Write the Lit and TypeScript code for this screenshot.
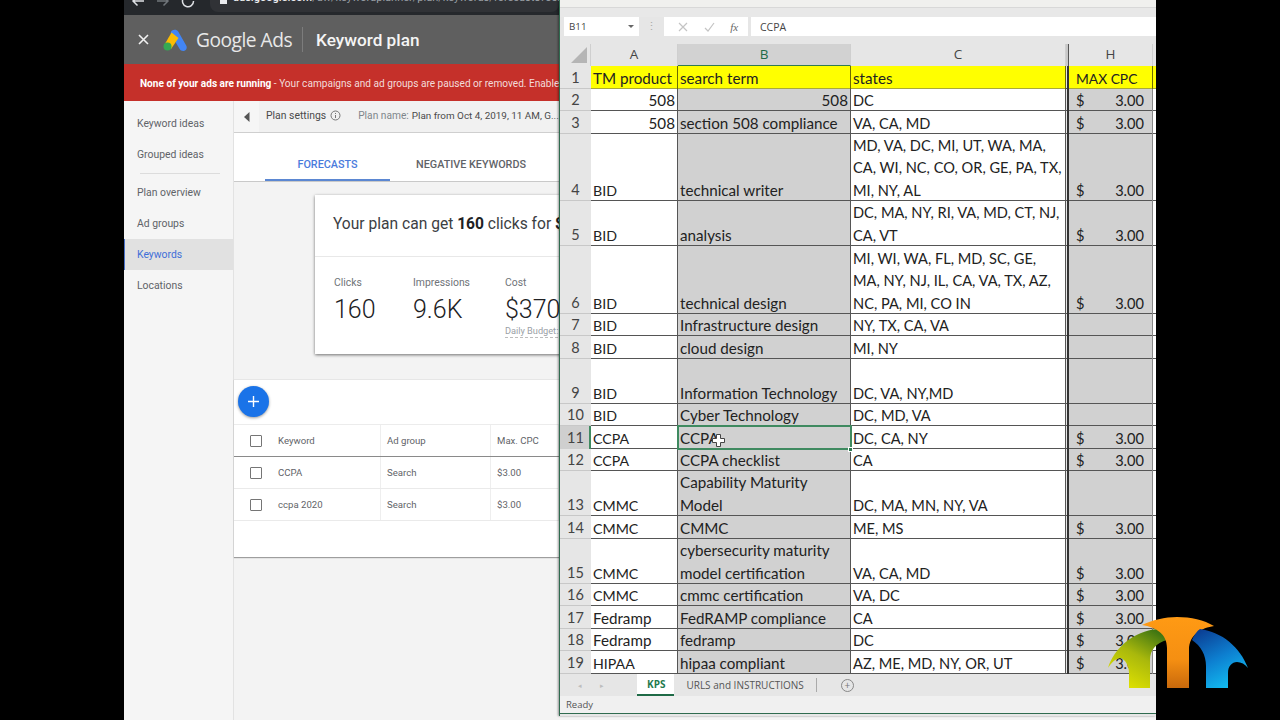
import { LitElement, html, css, svg } from 'lit';
import { customElement } from 'lit/decorators.js';

type Row = { n: number; lines: number; a: string; aRight?: boolean; b: string | string[]; bRight?: boolean; c: string[]; h: boolean };

const rows: Row[] = [
  { n: 2, lines: 1, a: '508', aRight: true, b: '508', bRight: true, c: ['DC'], h: true },
  { n: 3, lines: 1, a: '508', aRight: true, b: 'section 508 compliance', c: ['VA, CA, MD'], h: true },
  { n: 4, lines: 3, a: 'BID', b: 'technical writer', c: ['MD, VA, DC, MI, UT, WA, MA,', 'CA, WI, NC, CO, OR, GE, PA, TX,', 'MI, NY, AL'], h: true },
  { n: 5, lines: 2, a: 'BID', b: 'analysis', c: ['DC, MA, NY, RI, VA, MD, CT, NJ,', 'CA, VT'], h: true },
  { n: 6, lines: 3, a: 'BID', b: 'technical design', c: ['MI, WI, WA, FL, MD, SC, GE,', 'MA, NY, NJ, IL, CA, VA, TX, AZ,', 'NC, PA, MI, CO IN'], h: true },
  { n: 7, lines: 1, a: 'BID', b: 'Infrastructure design', c: ['NY, TX, CA, VA'], h: false },
  { n: 8, lines: 1, a: 'BID', b: 'cloud design', c: ['MI, NY'], h: false },
  { n: 9, lines: 2, a: 'BID', b: 'Information Technology', c: ['DC, VA, NY,MD'], h: false },
  { n: 10, lines: 1, a: 'BID', b: 'Cyber Technology', c: ['DC, MD, VA'], h: false },
  { n: 11, lines: 1, a: 'CCPA', b: 'CCPA', c: ['DC, CA, NY'], h: true },
  { n: 12, lines: 1, a: 'CCPA', b: 'CCPA checklist', c: ['CA'], h: true },
  { n: 13, lines: 2, a: 'CMMC', b: ['Capability Maturity', 'Model'], c: ['DC, MA, MN, NY, VA'], h: false },
  { n: 14, lines: 1, a: 'CMMC', b: 'CMMC', c: ['ME, MS'], h: true },
  { n: 15, lines: 2, a: 'CMMC', b: ['cybersecurity maturity', 'model certification'], c: ['VA, CA, MD'], h: true },
  { n: 16, lines: 1, a: 'CMMC', b: 'cmmc certification', c: ['VA, DC'], h: true },
  { n: 17, lines: 1, a: 'Fedramp', b: 'FedRAMP compliance', c: ['CA'], h: true },
  { n: 18, lines: 1, a: 'Fedramp', b: 'fedramp', c: ['DC'], h: true },
  { n: 19, lines: 1, a: 'HIPAA', b: 'hipaa compliant', c: ['AZ, ME, MD, NY, OR, UT'], h: true },
];

const keywords = [
  { k: 'CCPA', g: 'Search', c: '$3.00' },
  { k: 'ccpa 2020', g: 'Search', c: '$3.00' },
];

const logo = svg`
  <svg class="logo" width="142" height="74" viewBox="1107 616 142 74">
    <defs>
      <linearGradient id="lg" x1="0.2" y1="1" x2="0.75" y2="0">
        <stop offset="0" stop-color="#e6e600" /><stop offset="0.55" stop-color="#a9b80c" /><stop offset="1" stop-color="#3f7512" />
      </linearGradient>
      <linearGradient id="lo" x1="0" y1="0" x2="0" y2="1">
        <stop offset="0" stop-color="#ff9a14" /><stop offset="0.6" stop-color="#f58f12" /><stop offset="1" stop-color="#c8690c" />
      </linearGradient>
      <linearGradient id="lb" x1="0.2" y1="0" x2="0.7" y2="1">
        <stop offset="0" stop-color="#0b3f94" /><stop offset="0.5" stop-color="#0d7fd0" /><stop offset="1" stop-color="#12bff2" />
      </linearGradient>
    </defs>
    <path fill="url(#lg)" d="M1108 668C1114 648 1134 631 1157 629C1161 631 1165 636 1167 640C1156 643 1150 650 1150 660V688H1129V673C1129 665 1125 659 1120 658C1115 659 1111 663 1108 668Z" />
    <path fill="url(#lo)" d="M1142 625C1152 620 1165 617 1177 617C1191 617 1204 620 1214 626C1202 628 1189 634 1189 650V688H1167V648C1167 634 1156 627 1142 625Z" />
    <path fill="url(#lb)" d="M1192 640C1194 635 1197 631 1200 629C1222 632 1240 647 1248 668C1245 664 1241 662 1237 662C1232 662 1228 666 1228 673V688H1206V666C1206 655 1201 646 1192 640Z" />
  </svg>
`;

// row lines land on whole pixels, 22.5px per text line starting from y=66
const rowHeight = (before: number, lines: number) =>
  Math.round(66.4 + (before + lines) * 22.5) - Math.round(66.4 + before * 22.5);

@customElement('app-root')
export class AppRoot extends LitElement {
  static styles = css`
    :host {
      display: block;
      width: 1280px;
      height: 720px;
      background: #000;
      overflow: hidden;
      font-family: Roboto, 'Liberation Sans', sans-serif;
    }
    .stage {
      position: relative;
      display: grid;
      grid-template-columns: 435px 597px;
      width: 1032px;
      height: 720px;
      margin-left: 124px;
      background: #f3f3f3;
    }
    .logo {
      position: absolute;
      left: 983px;
      top: 616px;
    }

    /* browser side */
    .browser {
      display: flex;
      flex-direction: column;
      height: 720px;
      overflow: hidden;
      background: #f3f3f3;
    }
    .chrome {
      flex: 0 0 15px;
      display: flex;
      align-items: flex-start;
      gap: 11px;
      padding-left: 7px;
      background: #25282c;
      overflow: hidden;
    }
    .chrome svg { flex: none; margin-top: -6px; }
    .pill {
      flex: 1;
      display: flex;
      align-items: flex-start;
      margin-left: 4px;
      height: 12px;
      padding-left: 10px;
      background: #303236;
      border-radius: 0 0 8px 8px;
      overflow: hidden;
    }
    .lock { flex: none; width: 7px; height: 4px; background: #e8eaed; }
    .url {
      margin: -9px 0 0 6px;
      white-space: nowrap;
      font-size: 11px;
      line-height: 14px;
      color: #9aa0a6;
    }
    .url b { font-weight: 500; color: #e8eaed; }
    .head {
      flex: 0 0 49px;
      display: flex;
      align-items: center;
      background: #5f5f5f;
      color: #f1f1f1;
    }
    .head .close { margin-left: 14px; }
    .head .ads-mark { margin-left: 14px; }
    .brand {
      margin-left: 9px;
      padding-right: 10px;
      font-family: 'Open Sans', sans-serif;
      font-size: 19.2px;
      letter-spacing: -0.5px;
      line-height: 25px;
      color: #e8e8e8;
      border-right: 1px solid #7c7c7c;
    }
    .title {
      margin-left: 13px;
      font-size: 17.2px;
      font-weight: 500;
      color: #f5f5f5;
    }
    .banner {
      flex: 0 0 37px;
      display: flex;
      align-items: center;
      padding: 2px 0 0 16px;
      box-sizing: border-box;
      background: #c5302a;
      color: #f3dcda;
      font-size: 10.1px;
      white-space: nowrap;
      overflow: hidden;
    }
    .banner b { font-weight: 700; color: #fff; }
    .body {
      flex: 1;
      display: grid;
      grid-template-columns: 110px 1fr;
      min-height: 0;
    }
    .side {
      padding-top: 7px;
      background: #f5f5f5;
      border-right: 1px solid #e2e2e2;
    }
    .side div {
      height: 31px;
      display: flex;
      align-items: center;
      padding-left: 13px;
      font-size: 10.4px;
      color: #5f6368;
    }
    .side hr {
      height: 1px;
      margin: 3px 13px 3px 16px;
      border: 0;
      background: #dcdcdc;
    }
    .side .on {
      padding-left: 12px;
      background: #e1e1e1;
      border-left: 1px solid #4a71c9;
      color: #3f6fd8;
    }
    .main { display: flex; flex-direction: column; min-width: 0; }
    .plan {
      flex: 0 0 32px;
      box-sizing: border-box;
      display: flex;
      align-items: center;
      padding-bottom: 2px;
      background: #f1f1f1;
      border-bottom: 1px solid #cfcfcf;
      font-size: 10.4px;
      color: #5f6368;
      white-space: nowrap;
      overflow: hidden;
    }
    .plan .back {
      flex: none;
      align-self: stretch;
      width: 25px;
      margin-bottom: -2px;
      display: flex;
      align-items: center;
      justify-content: center;
      background: #f6f6f6;
    }
    .plan .set { flex: none; margin-left: 7px; color: #4a4a4a; }
    .plan svg.info { flex: none; margin: 0 0 0 4px; }
    .plan .name { flex: none; margin-left: 17px; font-size: 10.2px; color: #80868b; }
    .plan .val { flex: none; margin-left: 3px; font-size: 9.9px; color: #4a4a4a; }
    .tabs {
      flex: 0 0 49px;
      box-sizing: border-box;
      display: flex;
      background: #fff;
      border-bottom: 1px solid #c9c9c9;
      padding-left: 31px;
      font-size: 10.8px;
      font-weight: 500;
      white-space: nowrap;
    }
    .tabs div {
      display: flex;
      align-items: center;
      justify-content: center;
      padding-top: 14px;
      box-sizing: border-box;
      width: 125px;
      color: #5f6368;
    }
    .tabs .on { color: #4a7bdc; box-shadow: inset 0 -2px 0 #5b87d2; }
    .tabs .neg { width: 162px; }
    .forecast {
      flex: 0 0 197px;
      box-sizing: border-box;
      padding: 13px 0 0 81px;
      background: #f3f3f3;
      overflow: hidden;
    }
    .card {
      width: 300px;
      height: 159px;
      background: #fff;
      box-shadow: 0 1px 3px rgba(0, 0, 0, 0.55);
    }
    .card h2 {
      margin: 0;
      height: 62px;
      padding: 19px 0 0 18px;
      box-sizing: border-box;
      border-bottom: 1px solid #e8e8e8;
      font-size: 15.6px;
      line-height: 20px;
      font-weight: 400;
      color: #3c4043;
      white-space: nowrap;
    }
    .card h2 b { color: #202124; font-weight: 700; }
    .stats { display: flex; padding: 20px 0 0 19px; }
    .stat { flex: none; }
    .stat .l { font-size: 10.4px; line-height: 12px; color: #6f7378; }
    .stat .v { margin-top: 6px; font-size: 25px; line-height: 30px; font-weight: 300; color: #202124; }
    .stat .d {
      width: fit-content;
      font-size: 9.2px;
      line-height: 12px;
      color: #9aa0a6;
      border-bottom: 1px dashed #bdbdbd;
      white-space: nowrap;
    }
    .panel {
      flex: 0 0 178px;
      box-sizing: border-box;
      background: #fff;
      border-top: 1px solid #e6e6e6;
      box-shadow: 0 1px 1px rgba(0, 0, 0, 0.35);
      font-size: 9.6px;
      color: #5f6368;
    }
    .fab-row { height: 45px; padding: 6px 0 0 4px; box-sizing: border-box; border-bottom: 1px solid #ececec; }
    .fab {
      width: 31px;
      height: 31px;
      display: flex;
      align-items: center;
      justify-content: center;
      border-radius: 50%;
      background: #1a73e8;
      box-shadow: 0 1px 3px rgba(0, 0, 0, 0.4);
    }
    .kw {
      display: grid;
      grid-template-columns: 147px 110px 1fr;
      height: 32px;
      box-sizing: border-box;
      align-items: stretch;
      border-bottom: 1px solid #eaeaea;
    }
    .kw.hd { border-bottom: 1px solid #8a8a8a; }
    .kw > div {
      display: flex;
      align-items: center;
      padding-left: 6px;
      border-right: 1px solid #eeeeee;
    }
    .kw > div:first-child { padding-left: 16px; gap: 16px; }
    .cb {
      flex: none;
      width: 10px;
      height: 10px;
      border: 1px solid #757575;
      border-radius: 1px;
    }

    /* sheet side */
    .xl {
      display: flex;
      flex-direction: column;
      height: 716px;
      background: #e6e6e6;
      border-left: 1px solid #2f6b4f;
      box-shadow: -1px 0 2px rgba(0, 0, 0, 0.4);
      font-family: Lato, 'Liberation Sans', sans-serif;
      overflow: hidden;
      position: relative;
    }
    .xl-title { flex: 0 0 7px; background: #f0f0ee; border-bottom: 1px solid #d8d8d8; }
    .xl-rib { flex: 0 0 9px; background: #e8e8e8; }
    .fbar {
      flex: 0 0 19px;
      display: flex;
      align-items: stretch;
      background: #e6e6e6;
      font-family: 'Open Sans', sans-serif;
      font-size: 9.8px;
      color: #444;
    }
    .namebox {
      width: 75px;
      margin-left: 4px;
      display: flex;
      align-items: center;
      justify-content: space-between;
      padding: 0 5px;
      box-sizing: border-box;
      background: #fff;
    }
    .namebox i { width: 0; height: 0; border: 3px solid transparent; border-top: 3px solid #666; margin-top: 3px; }
    .grip { width: 25px; text-align: center; line-height: 18px; color: #aaa; font-size: 11px; }
    .fx {
      width: 84px;
      display: flex;
      align-items: center;
      justify-content: space-around;
      padding: 0 2px 0 6px;
      box-sizing: border-box;
      background: #fff;
    }
    .fx em { font-family: 'Liberation Serif', serif; color: #666; font-size: 11px; }
    .input {
      flex: 1;
      margin-left: 3px;
      padding-left: 9px;
      display: flex;
      align-items: center;
      background: #fff;
      font-size: 10.5px;
    }
    .gap { flex: 0 0 8px; background: #e6e6e6; }
    .row { display: grid; grid-template-columns: 31px 87px 173px 215px 3px 84px 4px; grid-template-rows: minmax(0, 1fr); }
    .cols { flex: 0 0 22px; background: #e6e6e6; color: #444; font-family: 'Open Sans', sans-serif; font-size: 13.5px; }
    .cols > div { display: flex; align-items: center; justify-content: center; padding-bottom: 2px; box-sizing: border-box; border-right: 1px solid #cfcfcf; }
    .cols .corner { align-items: flex-end; justify-content: flex-end; padding: 0 3px 3px 0; }
    .cols .sel { background: #d2d2d2; color: #1f6b47; border-bottom: 1px solid #2f7a52; }
    .cols .thin { background: #c8c8c8; border-right: 1px solid #555; }
    .grid { flex: 0 0 608px; overflow: hidden; }
    .cell {
      box-sizing: border-box;
      padding: 0 2px;
      background: #fff;
      border-right: 1px solid #555;
      box-shadow: inset 0 -1px 0 #555;
      font-size: 15.2px;
      line-height: 22.5px;
      color: #222;
      display: flex;
      flex-direction: column;
      justify-content: flex-end;
      white-space: nowrap;
      position: relative;
    }
    .cell.num {
      background: #e6e6e6;
      color: #444;
      font-size: 14.5px;
      align-items: center;
      padding: 0;
      border-right: 0;
      box-shadow: inset 0 -1px 0 #c8c8c8;
    }
    .cell.right { text-align: right; }
    .cell.caps { font-size: 14.2px; }
    .cell.st { font-size: 14.6px; }
    .cell.grey { background: #d1d1d1; }
    .cell.yellow { background: #ffff00; box-shadow: inset 0 -1px 0 #a9a93a; border-right-color: #6c6c00; }
    .cell.cur { box-shadow: none; outline: 2px solid #3f8a60; outline-offset: -1px; z-index: 1; }
    .cell.gut { padding: 0; background: #e6e6e6; border-right: 2px solid #333; }
    .cell.end { background: #fff; border-right: 0; }
    .cell.num.sel { background: #cfcfcf; box-shadow: inset -2px 0 0 #3f8a60; }
    /* these sizes sit a pixel high on the shared line box */
    .cell.caps > div:last-child,
    .cell.st > div:last-child,
    .maxcpc > div,
    .money > span { margin-bottom: -1px; }
    .money { flex-direction: row; align-items: flex-end; justify-content: space-between; padding: 0 8px 0 7px; font-size: 14.6px; border-right-color: #888; }
    .maxcpc { padding-left: 7px; font-size: 13.8px; }
    .handle { position: absolute; right: -3px; bottom: -3px; width: 5px; height: 5px; background: #2f7a52; border: 1px solid #fff; box-sizing: border-box; }
    .pointer { position: absolute; left: 34px; top: 8px; }
    .tabsbar {
      flex: 0 0 22px;
      display: flex;
      align-items: stretch;
      padding-left: 18px;
      background: #e6e6e6;
      font-family: 'Open Sans', sans-serif;
      font-size: 10px;
      color: #555;
    }
    .nav { display: flex; align-items: center; gap: 18px; width: 59px; color: #bdbdbd; font-size: 7px; }
    .sheet { display: flex; align-items: center; padding: 0 9px 0 10px; background: #fff; border-bottom: 2px solid #1f6b47; color: #1f7a4d; font-weight: 700; }
    .sheet2 { display: flex; align-items: center; padding: 0 12px 0 12px; border-right: 1px solid #aaa; margin: 4px 0; }
    .plus {
      align-self: center;
      margin-left: 24px;
      width: 11px;
      height: 11px;
      border: 1px solid #888;
      border-radius: 50%;
      text-align: center;
      line-height: 10px;
      color: #777;
    }
    .status {
      flex: 0 0 18px;
      display: flex;
      align-items: center;
      padding: 0 0 1px 6px;
      box-sizing: border-box;
      background: #f0f0f0;
      border-bottom: 1px solid #2f6b4f;
      font-family: 'Open Sans', sans-serif;
      font-size: 9.5px;
      color: #555;
    }
  `;

  renderRow(r: Row, before: number) {
    const cur = r.n === 11;
    const lines = Array.isArray(r.b) ? r.b : [r.b];
    const isCaps = r.a === r.a.toUpperCase() && !r.aRight;
    return html`
      <div class="row" style="height:${rowHeight(before, r.lines)}px">
        <div class="cell num ${cur ? 'sel' : ''}">${r.n}</div>
        <div class="cell ${r.aRight ? 'right' : ''} ${isCaps ? 'caps' : ''}"><div>${r.a}</div></div>
        <div class="cell grey ${r.bRight ? 'right' : ''} ${cur ? 'cur' : ''}">
          ${lines.map((t) => html`<div>${t}</div>`)}
          ${cur
            ? html`<svg class="pointer" width="13" height="13" viewBox="0 0 13 13"><path d="M4.500.5h4v4h4v4h-4v4h-4v-4h-4v-4h4z" fill="#fff" stroke="#444" /></svg><span class="handle"></span>`
            : ''}
        </div>
        <div class="cell st">${r.c.map((t) => html`<div>${t}</div>`)}</div>
        <div class="cell gut"></div>
        <div class="cell grey money">${r.h ? html`<span>$</span><span>3.00</span>` : ''}</div>
        <div class="cell end"></div>
      </div>
    `;
  }

  render() {
    let before = 1;
    return html`
      <div class="stage">
        <div class="browser">
          <div class="chrome">
            <svg width="14" height="14" viewBox="0 0 14 14" fill="none" stroke="#dfe1e5" stroke-width="1.5"><path d="M13 7H2M6.500 2.500 2 7l4.500 4.500" /></svg>
            <svg width="14" height="14" viewBox="0 0 14 14" fill="none" stroke="#70757a" stroke-width="1.5"><path d="M1 7h11M7.500 2.500 12 7l-4.500 4.500" /></svg>
            <svg width="14" height="14" viewBox="0 0 14 14" fill="none" stroke="#dfe1e5" stroke-width="1.5"><path d="M11.500 4A5.500 5.500 0 1 0 12.500 7M12 1v3.500H8.500" /></svg>
            <div class="pill">
              <span class="lock"></span>
              <div class="url"><b>ads.google.com</b>/aw/keywordplanner/plan/keywords/forecasts?ocid=</div>
            </div>
          </div>
          <div class="head">
            <svg class="close" width="11" height="11" viewBox="0 0 11 11" stroke="#f1f1f1" stroke-width="1.6"><path d="M1 1l9 9M10 1l-9 9" /></svg>
            <svg class="ads-mark" width="24" height="22" viewBox="0 0 24 22">
              <path d="M9 1.500c2-1.500 5-1 6.200 1l8 14c1.200 2.300.3 4.500-1.700 5.200-2 .7-4-.2-5-2L8 5.500C7.500 4.200 7.800 2.500 9 1.500z" fill="#4285f4" />
              <path d="M8.500 3.500 1 16.500l7 3.500 7.500-11z" fill="#fbbc04" />
              <circle cx="4.500" cy="17.500" r="4" fill="#34a853" />
            </svg>
            <div class="brand">Google Ads</div>
            <div class="title">Keyword plan</div>
          </div>
          <div class="banner"><b>None of your ads are running</b>&nbsp;- Your campaigns and ad groups are paused or removed. Enable</div>
          <div class="body">
            <nav class="side">
              <div>Keyword ideas</div>
              <div>Grouped ideas</div>
              <hr />
              <div>Plan overview</div>
              <div>Ad groups</div>
              <div class="on">Keywords</div>
              <div>Locations</div>
            </nav>
            <div class="main">
              <div class="plan">
                <div class="back"><svg width="6" height="10" viewBox="0 0 6 10"><path d="M5.500 0v10L0 5z" fill="#555" /></svg></div>
                <span class="set">Plan settings</span>
                <svg class="info" width="11" height="11" viewBox="0 0 11 11" fill="none" stroke="#777"><circle cx="5.500" cy="5.500" r="4.500" /><path d="M5.500 5v3M5.500 3v1" /></svg>
                <span class="name">Plan name:</span><span class="val">Plan from Oct 4, 2019, 11 AM, G...</span>
              </div>
              <div class="tabs">
                <div class="on">FORECASTS</div>
                <div class="neg">NEGATIVE KEYWORDS</div>
              </div>
              <div class="forecast">
                <div class="card">
                  <h2>Your plan can get <b>160</b> clicks for <b>$370</b></h2>
                  <div class="stats">
                    <div class="stat" style="width:79px"><div class="l">Clicks</div><div class="v">160</div></div>
                    <div class="stat" style="width:92px"><div class="l">Impressions</div><div class="v">9.6K</div></div>
                    <div class="stat"><div class="l">Cost</div><div class="v">$370</div><div class="d">Daily Budget:</div></div>
                  </div>
                </div>
              </div>
              <div class="panel">
                <div class="fab-row">
                  <div class="fab"><svg width="11" height="11" viewBox="0 0 11 11" stroke="#fff" stroke-width="1.4"><path d="M5.500 0v11M0 5.500h11" /></svg></div>
                </div>
                <div class="kw hd"><div><span class="cb"></span>Keyword</div><div>Ad group</div><div>Max. CPC</div></div>
                ${keywords.map((k) => html`<div class="kw"><div><span class="cb"></span>${k.k}</div><div>${k.g}</div><div>${k.c}</div></div>`)}
              </div>
            </div>
          </div>
        </div>
        <div class="xl">
          <div class="xl-title"></div>
          <div class="xl-rib"></div>
          <div class="fbar">
            <div class="namebox">B11<i></i></div>
            <div class="grip">⋮</div>
            <div class="fx">
              <svg width="10" height="10" viewBox="0 0 10 10" stroke="#c4c4c4" stroke-width="1.2"><path d="M1 1l8 8M9 1l-8 8" /></svg>
              <svg width="11" height="10" viewBox="0 0 11 10" fill="none" stroke="#c4c4c4" stroke-width="1.2"><path d="M1 6l3 3 6-8" /></svg>
              <em>fx</em>
            </div>
            <div class="input">CCPA</div>
          </div>
          <div class="gap"></div>
          <div class="row cols">
            <div class="corner"><svg width="16" height="16" viewBox="0 0 16 16"><path d="M16 0v16H0z" fill="#b5b5b5" /></svg></div>
            <div>A</div><div class="sel">B</div><div>C</div><div class="thin"></div><div>H</div><div></div>
          </div>
          <div class="grid">
            <div class="row" style="height:${rowHeight(0, 1)}px">
              <div class="cell num">1</div>
              <div class="cell yellow">TM product</div>
              <div class="cell yellow">search term</div>
              <div class="cell yellow">states</div>
              <div class="cell gut"></div>
              <div class="cell yellow maxcpc"><div>MAX CPC</div></div>
              <div class="cell yellow"></div>
            </div>
            ${rows.map((r) => {
              const row = this.renderRow(r, before);
              before += r.lines;
              return row;
            })}
          </div>
          <div class="tabsbar">
            <div class="nav"><span>◂</span><span>▸</span></div>
            <div class="sheet">KPS</div>
            <div class="sheet2">URLS and INSTRUCTIONS</div>
            <div class="plus">+</div>
          </div>
          <div class="status">Ready</div>
        </div>
        ${logo}
      </div>
    `;
  }
}

declare global {
  interface HTMLElementTagNameMap {
    'app-root': AppRoot;
  }
}
